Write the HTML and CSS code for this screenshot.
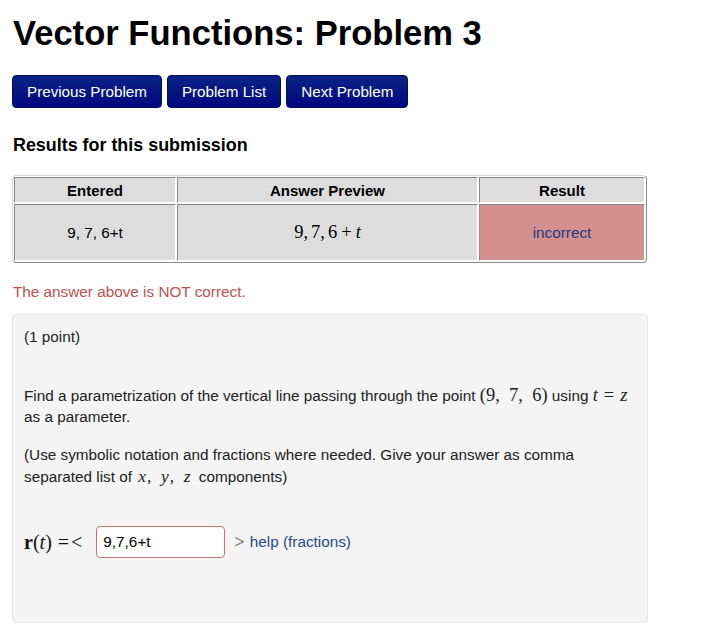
FILE: index.html
```html
<!DOCTYPE html>
<html>
<head>
<meta charset="utf-8">
<link rel="stylesheet" href="styles.css">
</head>
<body>
<div class="page">
  <h1 class="title">Vector Functions: Problem 3</h1>
  <div class="nav">
    <a class="btn" href="#">Previous Problem</a>
    <a class="btn" href="#">Problem List</a>
    <a class="btn" href="#">Next Problem</a>
  </div>
  <h2 class="results-title">Results for this submission</h2>
  <table class="results">
    <thead>
      <tr>
        <th class="c1">Entered</th>
        <th class="c2">Answer Preview</th>
        <th class="c3">Result</th>
      </tr>
    </thead>
    <tbody>
      <tr>
        <td class="c1">9, 7, 6+t</td>
        <td class="c2"><span class="math">9<span class="mp">,</span>7<span class="mp">,</span>6<span class="mop">+</span><i>t</i></span></td>
        <td class="c3 bad">incorrect</td>
      </tr>
    </tbody>
  </table>
  <p class="error">The answer above is NOT correct.</p>
  <div class="problem">
    <p class="points">(1 point)</p>
    <p class="text">Find a parametrization of the vertical line passing through the point <span class="math big">(9,&nbsp;&nbsp;7,&nbsp;&nbsp;6)</span> using <span class="math"><i>t</i><span class="mop wide">=</span><i>z</i></span><br>as a parameter.</p>
    <p class="text tall">(Use symbolic notation and fractions where needed. Give your answer as comma<br>separated list of <span class="math small"><i>x</i><span class="sep">,</span><i>y</i><span class="sep">,</span><i>z</i></span> components)</p>
    <div class="answer">
      <span class="math rt"><b>r</b>(<i>t</i>)<span class="eq">=&lt;</span></span>
      <input class="ans-input" type="text" value="9,7,6+t">
      <span class="math gt">&gt;</span>
      <a class="help" href="#">help (fractions)</a>
    </div>
  </div>
</div>
</body>
</html>
```

FILE: styles.css
```css
html, body {
  margin: 0;
  padding: 0;
  background: #fff;
}

body {
  font-family: "Liberation Sans", Arial, sans-serif;
  font-size: 15.3px;
  color: #000;
}

.page {
  padding: 0 12px;
  width: 636px;
}

.title {
  margin: 12px 0 0 1px;
  font-size: 34.6px;
  line-height: 42px;
  font-weight: bold;
}

.nav {
  display: flex;
  gap: 5px;
  margin-top: 21px;
}

.btn {
  display: block;
  height: 31px;
  line-height: 31px;
  padding: 0 14px;
  font-size: 15.2px;
  color: #fff;
  text-decoration: none;
  background: linear-gradient(#0c2383, #00087f);
  border: 1px solid #001060;
  border-radius: 4px;
}

.results-title {
  margin: 27px 0 0 1px;
  font-size: 17.9px;
  line-height: 20px;
  font-weight: bold;
}

.results {
  margin-top: 20px;
  width: 635px;
  border-collapse: separate;
  border-spacing: 1px;
  border: 1px solid;
  border-color: #d8d8d8 #8a8a8a #8a8a8a #d8d8d8;
  border-radius: 4px;
  table-layout: fixed;
}

.results th,
.results td {
  background: #dddddd;
  border: 1px solid;
  border-color: #8a8a8a #fff #fff #8a8a8a;
  text-align: center;
  padding: 0;
}

.results th {
  height: 24px;
  font-weight: bold;
  font-size: 15px;
}

.results td {
  height: 55px;
  font-size: 15.3px;
}

.results .c1 { width: 160px; }
.results .c2 { width: 299px; }
.results .c3 { width: auto; }

.results td.bad {
  background: #d48f8f;
  color: #233a82;
}

.math {
  font-family: "Liberation Serif", "DejaVu Serif", serif;
  font-size: 18.5px;
  line-height: 1;
}

.math.small {
  font-size: 17.5px;
  display: inline-block;
  margin: 0 3px 0 2px;
}

.math.small i {
  display: inline-block;
  padding-right: 1px;
}

.math.small .sep {
  display: inline-block;
  width: 14px;
}

.math i {
  font-style: italic;
}

.mp { margin-right: 3px; }

.mop { margin: 0 4px; }

.mop.wide { margin: 0 6px; }

.error {
  margin: 19px 0 0 1px;
  font-size: 15.3px;
  line-height: 20px;
  color: #c0504d;
}

.problem {
  margin-top: 12px;
  height: 296px;
  background: #f4f4f4;
  border: 1px solid #e4e4e4;
  border-radius: 4px;
  padding: 11px 11px 0 11px;
  color: #222;
}

.problem p {
  margin: 0;
  line-height: 21px;
}

.problem p.tall {
  line-height: 22px;
}

.points {
  margin-bottom: 38px !important;
}

.text {
  margin-bottom: 17px !important;
}

.answer {
  display: flex;
  align-items: center;
  margin-top: 38px;
}

.rt {
  font-size: 20px;
  color: #111;
}

.rt b { font-weight: bold; }

.eq { margin-left: 6px; letter-spacing: 2px; }

.ans-input {
  margin-left: 12px;
  width: 115px;
  height: 30px;
  box-sizing: content-box;
  padding: 0 6px;
  border: 1px solid #c87474;
  border-radius: 4px;
  background: #fff;
  font-family: "Liberation Sans", Arial, sans-serif;
  font-size: 15.3px;
  color: #000;
  outline: none;
}

.gt {
  margin-left: 9px;
  color: #555;
}

.help {
  margin-left: 5px;
  color: #1f4a8c;
  text-decoration: none;
  font-size: 15.3px;
}
```
